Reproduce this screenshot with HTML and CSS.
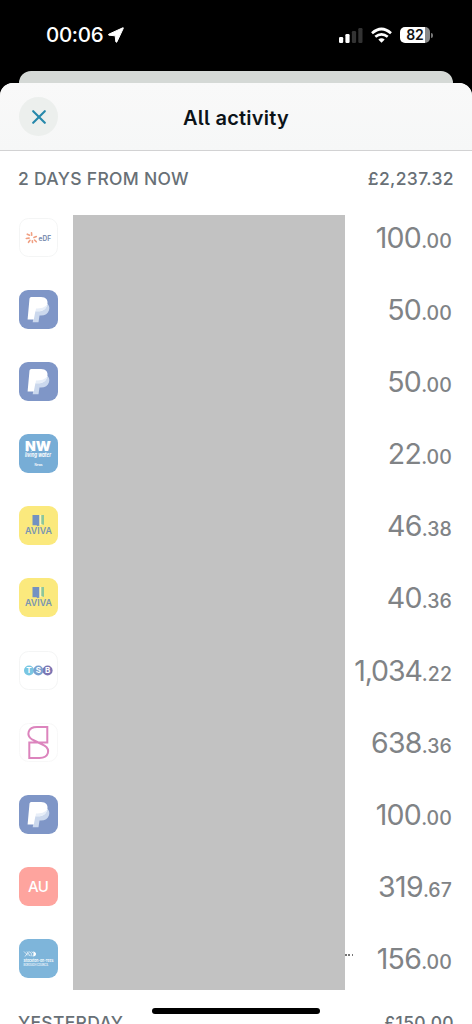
FILE: index.html
```html
<!DOCTYPE html>
<html lang="en">
<head>
<meta charset="utf-8">
<title>All activity</title>
<link rel="stylesheet" href="styles.css">
</head>
<body>
<svg class="defs" width="0" height="0">
  <symbol id="paypal" viewBox="0 0 39 39">
    <rect width="39" height="39" rx="9" fill="#7f96c7"/>
    <path d="M17 13h10c3 1.500 3.900 4 3 7.200-1 3.500-4 5.200-8 5.200h-1.500L19.500 32.200h-5.800z" fill="#cbd8ed"/>
    <path d="M12.200 7h9.800c5 0 7.200 3 6.400 7-1 5-4.500 7.300-9 7.300h-3L14.800 29.500H8.600l1.900-21Q10.700 7 12.200 7z" fill="#fff"/>
    <path d="M17 18.500c5 0 9-.8 11.400-4.500-.9 5-4.100 7.300-8.900 7.300h-3z" fill="#e7eef8"/>
  </symbol>
  <symbol id="aviva" viewBox="0 0 39 39">
    <rect width="39" height="39" rx="9" fill="#fbe97d"/>
    <path d="M13.500 9h7v10.500l-2 .8-1-1h-4z" fill="#7391c2"/>
    <path d="M20.500 9h2.300v9.500l-2.300 1z" fill="#fff5b8"/>
    <path d="M22.300 9H25v10l-2.700-1z" fill="#8cc79b"/>
    <text x="19.500" y="28.300" class="aviva-text" textLength="27" lengthAdjust="spacingAndGlyphs">AVIVA</text>
  </symbol>
</svg>

<div class="phone">
  <header class="status">
    <div class="clock"><span>00:06</span>
      <svg width="18" height="18" viewBox="0 0 18 18"><path d="M15.800 1.800 1.800 8.200q-.8.700.2 1l6.200.6.600 6q.4 1 1.100.1L16.300 2.300Q16.500 1.500 15.800 1.800z" fill="#fff" stroke="#fff" stroke-width="1" stroke-linejoin="round"/></svg>
    </div>
    <div class="indicators">
      <svg width="24" height="16" viewBox="0 0 24 16"><rect x="0" y="10" width="4.200" height="6" rx="1.200" fill="#fff"/><rect x="6.400" y="7" width="4.200" height="9" rx="1.200" fill="#fff"/><rect x="12.900" y="4" width="4.200" height="12" rx="1.200" fill="#333"/><rect x="19.300" y="1" width="4.200" height="15" rx="1.200" fill="#333"/></svg>
      <svg width="21" height="16" viewBox="0 0 21 16"><g fill="none" stroke="#fff" stroke-width="2.700"><path d="M1 6.200Q10.500-2.200 20 6.200"/><path d="M4.300 9.800q6.200-5 12.400 0"/></g><path d="M7.300 12.500q3.200-2.300 6.400 0L10.500 15.700z" fill="#fff"/></svg>
      <div class="battery"><span class="level">82</span><i class="cap"></i></div>
    </div>
  </header>
  <div class="back-sheet"></div>
  <main class="sheet">
    <div class="titlebar">
      <div class="close"><svg width="14" height="14" viewBox="0 0 14 14"><path d="M1.200 1.200l11.600 11.600m0-11.600l-11.600 11.600" stroke="#2688ab" stroke-width="2.100" stroke-linecap="round"/></svg></div>
      <h1><span>All activity</span></h1>
    </div>
    <div class="section"><span class="day">2 DAYS FROM NOW</span><span class="total">£2,237.32</span></div>
    <div class="activity">
      <div class="logos">
        <svg class="logo" viewBox="0 0 39 39"><rect x=".5" y=".5" width="38" height="38" rx="9" fill="#fff" stroke="#f4f5f5"/><g stroke="#f0a083" stroke-width="1.600" stroke-linecap="round" fill="none"><path d="M12.500 14.700l.2 2.600"/><path d="M8.300 16.200l2.300 1"/><path d="M7.300 20.500l2.800-.4"/><path d="M9.500 24.300l1.500-2"/><path d="M13.500 24.500l-.2-1.800"/><path d="M17.300 23.800l-1.800-1.800"/><path d="M17.300 18.500l-2.400.9"/></g><text x="19.500" y="22.600" class="edf-text" textLength="12.500" lengthAdjust="spacingAndGlyphs">eDF</text></svg>
        <svg class="logo"><use href="#paypal"/></svg>
        <svg class="logo"><use href="#paypal"/></svg>
        <svg class="logo" viewBox="0 0 39 39"><rect width="39" height="39" rx="9" fill="#77add6"/><text x="19" y="17.300" class="nw-text" textLength="26" lengthAdjust="spacingAndGlyphs">NW</text><text x="19" y="23.300" class="living-text" textLength="26" lengthAdjust="spacingAndGlyphs">living water</text><text x="19.500" y="31.500" class="tiny-text" textLength="8">News</text></svg>
        <svg class="logo"><use href="#aviva"/></svg>
        <svg class="logo"><use href="#aviva"/></svg>
        <svg class="logo" viewBox="0 0 39 39"><rect x=".5" y=".5" width="38" height="38" rx="9" fill="#fff" stroke="#f4f5f5"/><circle cx="10" cy="19.500" r="5" fill="#79c6e2"/><circle cx="28.600" cy="19.500" r="5" fill="#7c75b2"/><circle cx="19.300" cy="19.500" r="5" fill="#7aa2cf"/><g class="tsb-text"><text x="10" y="22.300">T</text><text x="19.300" y="22.300">S</text><text x="28.600" y="22.300">B</text></g></svg>
        <svg class="logo" viewBox="0 0 39 39"><rect x=".5" y=".5" width="38" height="38" rx="9" fill="#fff" stroke="#f8f8f8"/><path d="M19.300 19.500H28.300V4H18C8.500 4 7 12.500 13 16.500L19.300 19.500 25.500 22.700C31.500 26.500 30 35 20.500 35H10.300V19.500z" fill="none" stroke="#dc84bd" stroke-width="2"/></svg>
        <svg class="logo"><use href="#paypal"/></svg>
        <svg class="logo" viewBox="0 0 39 39"><rect width="39" height="39" rx="9" fill="#fea49e"/><text x="19.400" y="25.200" class="au-text" textLength="21">AU</text></svg>
        <svg class="logo" viewBox="0 0 39 39"><rect width="39" height="39" rx="9" fill="#7eb5da"/><g fill="none" stroke="#fff" stroke-width=".7"><path d="M5 12.500l4 4M6 17.500l3-4M8 12.500l3 4.500"/><path d="M9.500 12.800q4 .2 2.500 4.500M12.500 12.800q4 1.500 1 4.500"/></g><path d="M14 12.500q3 .5 3 2.500t-3 2.500l1-2.500z" fill="#fff"/><text x="4.500" y="22.800" class="stock-text" textLength="30" lengthAdjust="spacingAndGlyphs">Stockton-on-Tees</text><text x="4.500" y="26.600" class="stock-small" textLength="25" lengthAdjust="spacingAndGlyphs">BOROUGH COUNCIL</text></svg>
      </div>
      <div class="details"><span class="more"><i></i><i></i><i></i></span></div>
      <div class="amounts">
        <div class="amount">100<small>.00</small></div>
        <div class="amount">50<small>.00</small></div>
        <div class="amount">50<small>.00</small></div>
        <div class="amount">22<small>.00</small></div>
        <div class="amount">46<small>.38</small></div>
        <div class="amount">40<small>.36</small></div>
        <div class="amount long">1,034<small>.22</small></div>
        <div class="amount">638<small>.36</small></div>
        <div class="amount">100<small>.00</small></div>
        <div class="amount">319<small>.67</small></div>
        <div class="amount">156<small>.00</small></div>
      </div>
    </div>
    <div class="section next"><span class="day">YESTERDAY</span><span class="total">£150.00</span></div>
  </main>
  <div class="home-bar"></div>
</div>
</body>
</html>
```

FILE: styles.css
```css
* { box-sizing: border-box; }
body { margin: 0; background: #000; font-family: Inter, "Liberation Sans", sans-serif; }
.defs { display: block; height: 0; }
.phone { position: relative; width: 472px; height: 1024px; overflow: hidden; display: flex; flex-direction: column; background: #000; }
.status { height: 71px; flex: none; display: flex; justify-content: space-between; align-items: flex-start; padding: 0 39px 0 46px; color: #fff; }
.clock { display: flex; align-items: center; gap: 4px; height: 26px; margin-top: 22px; font-size: 20.500px; line-height: 26px; font-weight: 500; letter-spacing: -0.3px; }
.indicators { display: flex; align-items: center; gap: 8px; margin-top: 27px; height: 16px; }
.indicators svg { display: block; }
.battery { display: flex; align-items: center; gap: 1px; }
.level { width: 30px; height: 16px; line-height: 16px; border-radius: 5px; text-align: center; font-size: 14px; font-weight: 600; color: #111; background: linear-gradient(90deg, #fff 84%, #888 84%); }
.cap { width: 2px; height: 5px; border-radius: 0 2px 2px 0; background: #777; }
.back-sheet { height: 12px; flex: none; margin: 0 19px; border-radius: 12px 12px 0 0; background: #d5d9d6; }
.sheet { height: 941px; flex: none; overflow: hidden; border-radius: 13px 13px 0 0; background: #fff; }
.titlebar { height: 68px; padding: 0 19px; display: grid; grid-template-columns: 39px 1fr 39px; align-items: center; background: linear-gradient(#f9f9f9, #f6f7f7); border-bottom: 1px solid #d2d2d3; }
.close { width: 39px; height: 39px; border-radius: 50%; background: #ecefed; display: grid; place-items: center; }
.close svg { display: block; }
h1 { margin: 2px 0 0; text-align: center; font-size: 20px; line-height: 24px; font-weight: 600; letter-spacing: 0.25px; color: #0c1318; font-feature-settings: "cv05"; }
.section { height: 64px; padding: 17px 18px 0; display: flex; justify-content: space-between; font-size: 17.500px; line-height: 21px; font-weight: 550; color: #687076; }
.day { letter-spacing: 0.3px; }
.total { letter-spacing: 0.35px; }
.activity { height: 775px; padding: 0 20px 0 19px; display: grid; grid-template-columns: 54px 272px 1fr; }
.logos, .amounts { display: flex; flex-direction: column; gap: 33.1px; padding-top: 3px; }
.logo { display: block; width: 39px; height: 39px; flex: none; }
.details { position: relative; background: #c2c2c2; }
.more { position: absolute; left: 272px; top: 739px; display: flex; gap: 1.500px; }
.more i { width: 1.800px; height: 2px; background: #777; }
.amount { height: 39px; flex: none; display: flex; justify-content: flex-end; align-items: baseline; line-height: 39px; font-size: 28.500px; letter-spacing: -0.7px; color: #808386; white-space: nowrap; }
.amount.long { letter-spacing: -1.1px; }
.amount small { font-size: 19.500px; letter-spacing: 0.100px; font-weight: 450; }
.section.next { padding-top: 22px; height: 44px; }
.home-bar { position: absolute; left: 152px; top: 1008px; width: 168px; height: 6px; border-radius: 3px; background: #000; }
text { font-family: Inter, "Liberation Sans", sans-serif; text-anchor: middle; }
.aviva-text { font-size: 8.500px; font-weight: 600; fill: #7895b2; }
.edf-text { font-size: 7px; font-weight: 700; fill: #7e90b1; text-anchor: start; }
.nw-text { font-size: 13.500px; font-weight: 900; fill: #fff; }
.living-text { font-size: 5.500px; font-weight: 700; font-style: italic; fill: #fff; }
.tiny-text { font-size: 3px; font-weight: 600; fill: #fff; }
.tsb-text { font-size: 8px; font-weight: 700; fill: #fff; }
.au-text { font-size: 15px; font-weight: 500; fill: #fff; }
.stock-text { font-size: 3.700px; font-weight: 600; fill: #fff; text-anchor: start; }
.stock-small { font-size: 2.800px; font-weight: 500; fill: #fff; text-anchor: start; }
```
